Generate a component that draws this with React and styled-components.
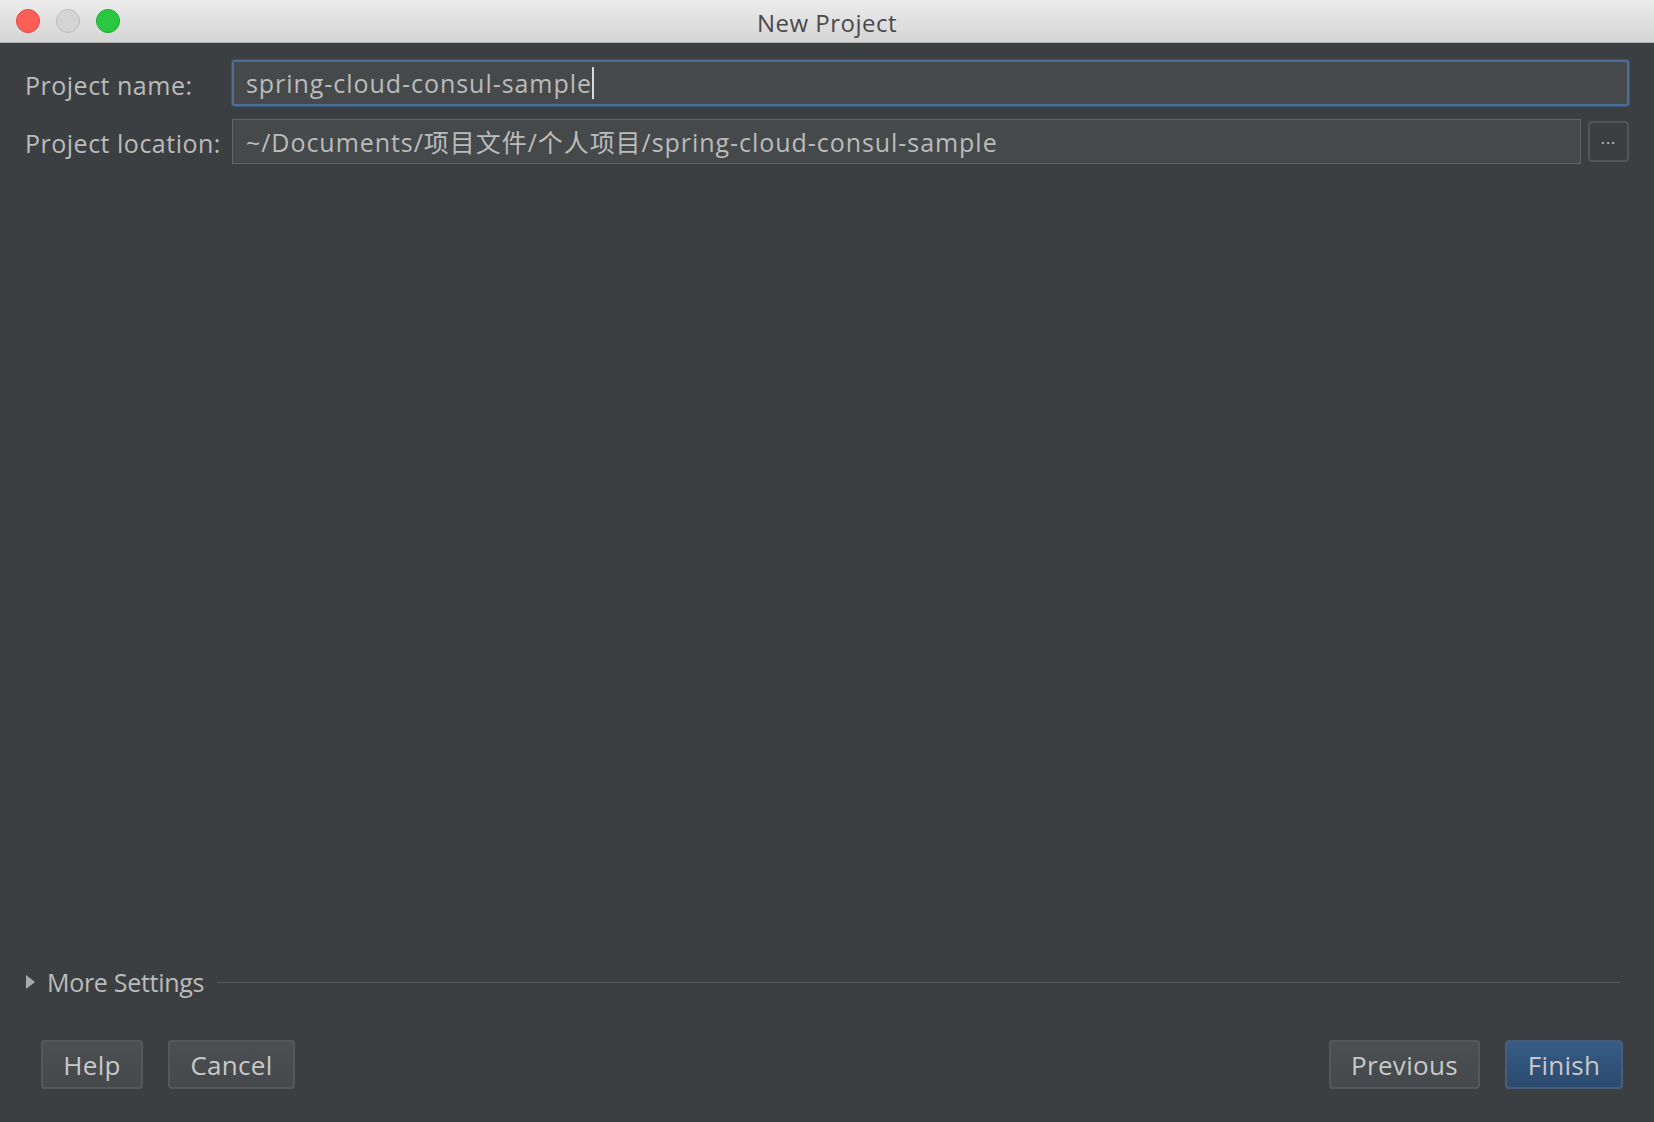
import React from 'react'
import styled, { createGlobalStyle } from 'styled-components'

const GlobalStyle = createGlobalStyle`
  html, body {
    margin: 0;
    padding: 0;
    height: 100%;
    background: #3c3f41;
  }
  #root {
    height: 100%;
  }
`

const Window = styled.div`
  display: flex;
  flex-direction: column;
  width: 1654px;
  height: 1122px;
  background-color: #3c3f41;
  font-family: "Open Sans", "Noto Sans CJK SC", sans-serif;
  overflow: hidden;
`

const TitleBar = styled.div`
  position: relative;
  display: flex;
  align-items: center;
  justify-content: center;
  height: 43px;
  flex-shrink: 0;
  background: linear-gradient(#ececec, #d5d5d5);
  border-bottom: 1px solid #b4b4b4;
  box-sizing: border-box;
`

const Lights = styled.div`
  position: absolute;
  left: 16px;
  top: 9px;
  display: flex;
  gap: 16px;
`

const Light = styled.span`
  width: 24px;
  height: 24px;
  border-radius: 50%;
  box-sizing: border-box;
  background: ${p => p.color};
  border: 1px solid ${p => p.edge};
`

const Title = styled.div`
  font-size: 24px;
  letter-spacing: 0.5px;
  color: #4a4a4a;
  margin-top: 2px;
`

const Content = styled.div`
  flex: 1;
  display: flex;
  flex-direction: column;
  padding: 17px 25px 0 25px;
`

const FormRow = styled.div`
  display: flex;
  align-items: center;
  height: 46px;
  margin-bottom: ${p => p.gap || 0}px;
`

const Label = styled.label`
  width: 207px;
  flex-shrink: 0;
  font-size: 25px;
  letter-spacing: 0.5px;
  color: #bbbbbb;
  margin-top: 3px;
  white-space: nowrap;
`

const Field = styled.div`
  flex: 1;
  height: ${p => (p.focused ? 46 : 45)}px;
  box-sizing: border-box;
  display: flex;
  align-items: center;
  padding-left: ${p => (p.focused ? 12 : 13)}px;
  background: #45494a;
  border: ${p => (p.focused ? '2px solid #4b6e98' : '1px solid #646464')};
  border-radius: ${p => (p.focused ? 3 : 0)}px;
  box-shadow: ${p => (p.focused ? '0 0 0 1px #3d5573' : 'none')};
  font-size: 25px;
  letter-spacing: 0.95px;
  color: #bbbbbb;
  white-space: nowrap;
`

const Caret = styled.span`
  display: inline-block;
  width: 2px;
  height: 32px;
  background: #d8d8d8;
  margin-left: 0;
`

const BrowseButton = styled.div`
  width: 41px;
  height: 41px;
  margin-left: 7px;
  box-sizing: border-box;
  border: 2px solid #535659;
  border-radius: 4px;
  background: #3c3f41;
  display: flex;
  align-items: center;
  justify-content: center;
  color: #c4c4c4;
  font-size: 16px;
  letter-spacing: 1px;
  padding-top: 4px;
`

const Spacer = styled.div`
  flex: 1;
`

const SettingsRow = styled.div`
  display: flex;
  align-items: center;
  margin-left: 1px;
  margin-right: 9px;
  height: 40px;
`

const Arrow = styled.span`
  width: 0;
  height: 0;
  border-top: 7px solid transparent;
  border-bottom: 7px solid transparent;
  border-left: 9px solid #a9a9a9;
  margin-right: 12px;
`

const SettingsText = styled.span`
  font-size: 25px;
  letter-spacing: -0.3px;
  color: #bbbbbb;
  margin-right: 13px;
`

const Rule = styled.div`
  flex: 1;
  height: 1px;
  background: #55585a;
  margin-top: 1px;
`

const Footer = styled.div`
  display: flex;
  align-items: center;
  padding: 0 6px 0 16px;
  margin-top: 38px;
  margin-bottom: 33px;
`

const Button = styled.button`
  height: 49px;
  min-width: ${p => p.w}px;
  box-sizing: border-box;
  margin-right: ${p => p.mr || 0}px;
  font-family: "Open Sans", sans-serif;
  font-size: 26px;
  letter-spacing: 0.3px;
  color: #c8c8c8;
  border-radius: 4px;
  border: 2px solid ${p => (p.primary ? '#4a5d78' : '#55585b')};
  background: ${p => (p.primary ? 'linear-gradient(#385c86, #2b4a6f)' : 'linear-gradient(#4b4f51, #45494b)')};
  padding: 0 16px;
`

const App = () => {
  return (
    <Window>
      <GlobalStyle />
      <TitleBar>
        <Lights>
          <Light color="#fc5f57" edge="#df4744" />
          <Light color="#d4d4d4" edge="#bcbcbc" />
          <Light color="#2ac840" edge="#1ea830" />
        </Lights>
        <Title>New Project</Title>
      </TitleBar>
      <Content>
        <FormRow gap={12}>
          <Label>Project name:</Label>
          <Field focused>
            spring-cloud-consul-sample<Caret />
          </Field>
        </FormRow>
        <FormRow>
          <Label>Project location:</Label>
          <Field>~/Documents/项目文件/个人项目/spring-cloud-consul-sample</Field>
          <BrowseButton>···</BrowseButton>
        </FormRow>
        <Spacer />
        <SettingsRow>
          <Arrow />
          <SettingsText>More Settings</SettingsText>
          <Rule />
        </SettingsRow>
        <Footer>
          <Button w={102} mr={25}>Help</Button>
          <Button w={127}>Cancel</Button>
          <Spacer />
          <Button w={151} mr={25}>Previous</Button>
          <Button w={118} primary>Finish</Button>
        </Footer>
      </Content>
    </Window>
  )
}

export default App
